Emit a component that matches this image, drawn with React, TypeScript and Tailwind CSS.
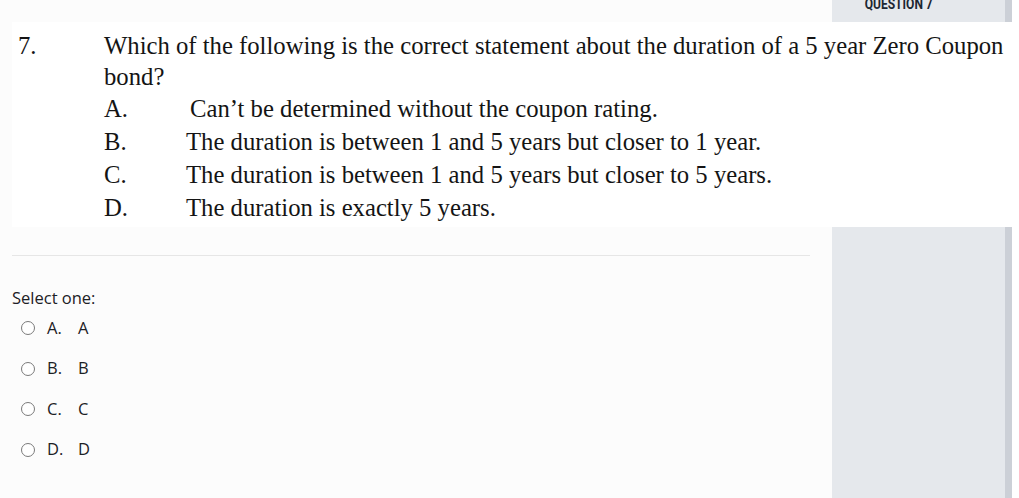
const options = [
  { key: "A", text: "Can’t be determined without the coupon rating.", indent: "pl-[86px]" },
  { key: "B", text: "The duration is between 1 and 5 years but closer to 1 year.", indent: "pl-[82px]" },
  { key: "C", text: "The duration is between 1 and 5 years but closer to 5 years.", indent: "pl-[82px]" },
  { key: "D", text: "The duration is exactly 5 years.", indent: "pl-[82px]" },
];

function SidePanel({ children }: { children?: React.ReactNode }) {
  return (
    <div className="flex shrink-0">
      <div className="w-[173px] bg-[#e5e8ec] overflow-hidden">{children}</div>
      <div className="w-[7px] bg-[#ccd0d7]" />
      <div className="w-[7px] bg-white" />
    </div>
  );
}

export default function App() {
  return (
    <div className="w-[1019px] h-[498px] overflow-hidden flex flex-col bg-[#fcfcfc]">
      {/* top strip */}
      <div className="h-[22px] flex">
        <div className="flex-1" />
        <SidePanel>
          <div className="-mt-[4px] pl-[38px] text-[14px] leading-[16px] font-bold text-[#1c2733] font-['Roboto',sans-serif] scale-x-[0.86] origin-left whitespace-nowrap">
            QUESTION 7
          </div>
        </SidePanel>
      </div>

      {/* question image */}
      <div className="h-[205px] pl-[12px] flex">
        <div className="flex-1 bg-white pl-[6px] pt-[8px] font-['Liberation_Serif',serif] text-[24.7px] text-[#141414] leading-[31px]">
          <div className="flex">
            <div className="w-[86px]">7.</div>
            <div className="flex-1 whitespace-nowrap">
              <div>Which of the following is the correct statement about the duration of a 5 year Zero Coupon</div>
              <div>bond?</div>
              <div className="leading-[33px]">
                {options.map((o) => (
                  <div key={o.key} className="flex">
                    <span className="w-0">{o.key}.</span>
                    <span className={o.indent}>{o.text}</span>
                  </div>
                ))}
              </div>
            </div>
          </div>
        </div>
      </div>

      {/* answer area */}
      <div className="flex-1 flex">
        <div className="flex-1 pl-[12px] pr-[22px] font-['Open_Sans',sans-serif] text-[#1d2125]">
          <div className="mt-[28px] border-t border-[#e6e6e6]" />
          <div className="mt-[31px] text-[16.5px] leading-[21px]">Select one:</div>
          <div className="mt-[10px] flex flex-col gap-[20.5px]">
            {["A", "B", "C", "D"].map((k) => (
              <label key={k} className="flex items-center h-[20px] text-[16.5px] text-[#1d2125]">
                <span className="ml-[9px] w-[14px] h-[14px] rounded-full border-[1.5px] border-[#7a7a7a] bg-white" />
                <span className="ml-[12px] w-[31px]">{k}.</span>
                <span>{k}</span>
              </label>
            ))}
          </div>
        </div>
        <SidePanel />
      </div>
    </div>
  );
}
